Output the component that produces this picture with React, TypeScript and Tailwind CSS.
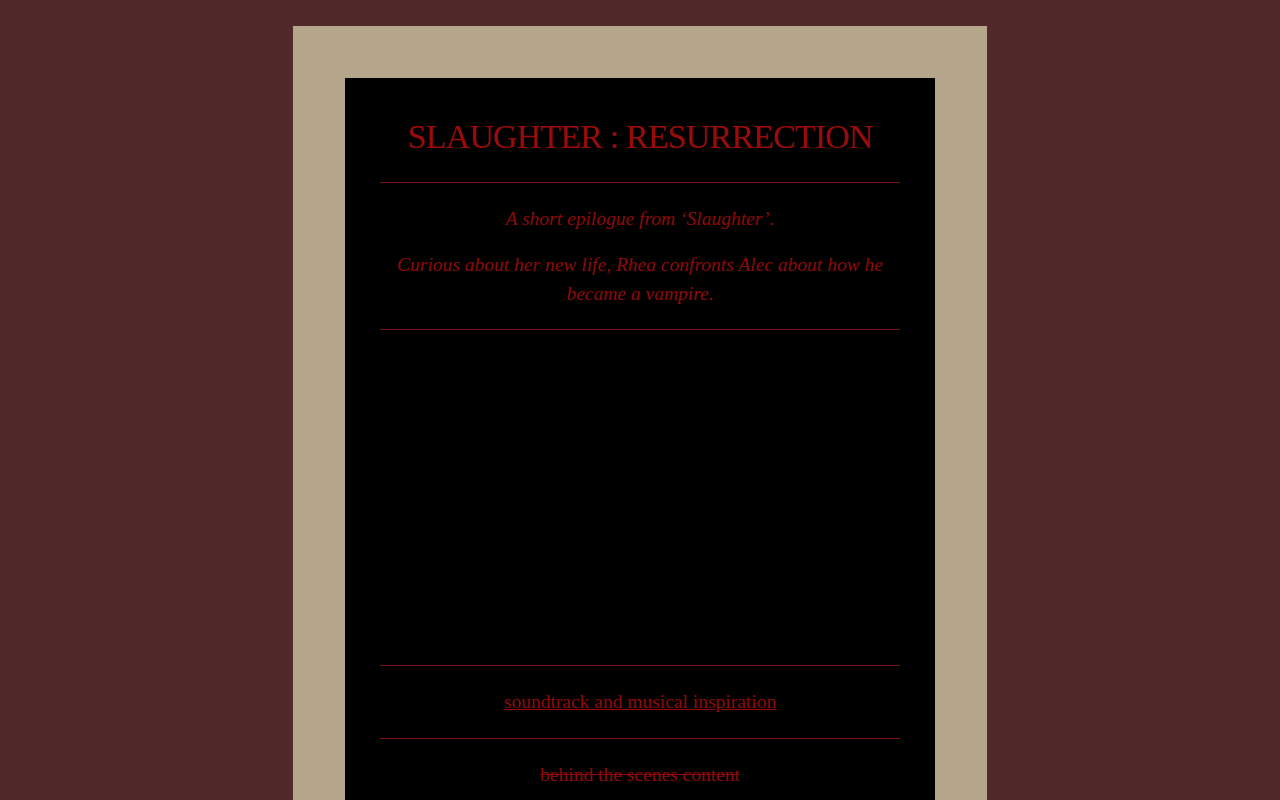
import React from 'react';

const serif = { fontFamily: '"Liberation Serif", "Times New Roman", serif' };

function Rule() {
  return <div className="h-px w-full bg-[#7d0f0f]" />;
}

export default function App() {
  return (
    <div className="min-h-screen bg-[#52292b] pt-[26px]" style={serif}>
      <div className="mx-auto w-[694px] bg-[#b5a58a] px-[52px] pt-[52px]">
        <div className="bg-black px-[35px] pt-[38px] pb-10 text-center text-[#9a0b0b]">
          <h1 className="text-[34px] leading-[41px] tracking-[-0.85px]">SLAUGHTER : RESURRECTION</h1>

          <div className="mt-[25px]">
            <Rule />
          </div>

          <div className="pt-[21px] pb-[21px] text-[19.5px] italic leading-[29px] text-[#8e0a0a]">
            <p>A short epilogue from ‘Slaughter’.</p>
            <p className="mt-[17px]">
              Curious about her new life, Rhea confronts Alec about how he became a vampire.
            </p>
          </div>

          <Rule />

          {/* player slot */}
          <div className="h-[335px] w-full bg-black" />

          <Rule />

          <div className="flex h-[72px] items-center justify-center">
            <a href="#" className="text-[19.5px] leading-[24px] text-[#8e0a0a] underline">
              soundtrack and musical inspiration
            </a>
          </div>

          <Rule />

          <div className="flex h-[72px] items-center justify-center">
            <span className="text-[19.5px] leading-[24px] text-[#8e0a0a] line-through">
              behind the scenes content
            </span>
          </div>
        </div>
      </div>
    </div>
  );
}
